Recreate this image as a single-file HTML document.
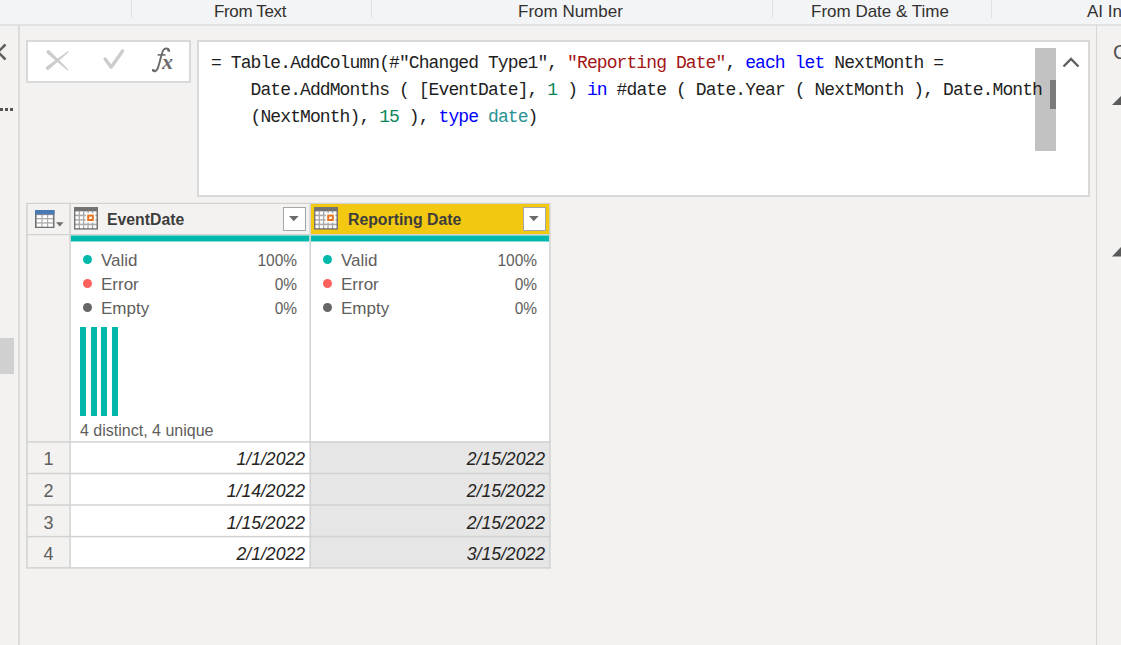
<!DOCTYPE html>
<html><head><meta charset="utf-8">
<style>
*{margin:0;padding:0;box-sizing:border-box}
html,body{width:1121px;height:645px;overflow:hidden;background:#f3f2f1;font-family:"Liberation Sans",sans-serif;color:#252423;position:relative}
.abs{position:absolute}
#top{left:0;top:0;width:1121px;height:24px;background:#f3f4f6}
#topb{left:0;top:24px;width:1121px;height:2px;background:#e0e1e3}
.sep{top:0;width:1px;height:18px;background:#e1e1e1}
.tt{top:2px;font-size:17px;line-height:20px;color:#323130;white-space:nowrap}
#lpb{left:18px;top:25px;width:2px;height:620px;background:#dcdcdc}
#rpb{left:1096px;top:25px;width:1px;height:620px;background:#d6d6d6}
#fxbox{left:26px;top:40px;width:165px;height:43px;background:#fff;border:2px solid #d9d9d9}
#fbox{left:197px;top:40px;width:893px;height:157px;background:#fff;border:2px solid #d9d9d9}
.code{font-family:"Liberation Mono",monospace;font-size:18px;letter-spacing:-0.91px;line-height:27px;white-space:pre;color:#1e1e1e}
.s{color:#a31515}.k{color:#0000ff}.n{color:#098658}.t{color:#2a9393}
.dt{font-style:italic;font-size:17.6px;line-height:20px;text-align:right;white-space:nowrap}
.rn{font-size:18px;line-height:20px;text-align:center;color:#605e5c}
.lbl{font-size:16px;line-height:20px;color:#605e5c;white-space:nowrap}
.hd{font-size:15.8px;font-weight:bold;line-height:20px;color:#3d3d3d;white-space:nowrap}
.dot{width:9px;height:9px;border-radius:50%}
</style></head><body>
<!-- top ribbon -->
<div id="top" class="abs"></div>
<div id="topb" class="abs"></div>
<div class="abs sep" style="left:131px"></div>
<div class="abs sep" style="left:371px"></div>
<div class="abs sep" style="left:772px"></div>
<div class="abs sep" style="left:991px"></div>
<div class="abs tt" style="left:214px;letter-spacing:-0.35px">From Text</div>
<div class="abs tt" style="left:518px">From Number</div>
<div class="abs tt" style="left:811px">From Date &amp; Time</div>
<div class="abs tt" style="left:1087px">AI In</div>

<div id="lpb" class="abs"></div>
<div id="rpb" class="abs"></div>

<!-- formula bar -->
<div id="fxbox" class="abs"></div>
<div id="fbox" class="abs"></div>
<div class="abs" style="left:1035px;top:48px;width:21px;height:103px;background:#c2c2c2"></div>
<div class="abs" style="left:1050px;top:80px;width:6px;height:29px;background:#7a7a7a"></div>
<div class="abs code" style="left:211px;top:50px">= Table.AddColumn(#"Changed Type1", <span class="s">"Reporting Date"</span>, <span class="k">each</span> <span class="k">let</span> NextMonth =
    Date.AddMonths ( [EventDate], <span class="n">1</span> ) <span class="k">in</span> #date ( Date.Year ( NextMonth ), Date.Month
    (NextMonth), <span class="n">15</span> ), <span class="k">type</span> <span class="t">date</span>)</div>


<!-- fx icons -->
<svg class="abs" style="left:40px;top:44px" width="90" height="32" viewBox="0 0 90 32">
<path d="M7.02 9.40 L27.60 26.44 L28.40 25.56 L9.58 6.60 A1.90 1.90 0 0 0 7.02 9.40Z" fill="#cdcdcd"/>
<path d="M8.98 25.49 L28.81 7.89 L28.19 7.11 L6.62 22.51 A1.90 1.90 0 0 0 8.98 25.49Z" fill="#cdcdcd"/>
<path d="M65.2 15 L71.1 23.2 L82.6 6.9" stroke="#cdcdcd" stroke-width="3.4" fill="none" stroke-linecap="round" stroke-linejoin="round"/>
</svg>
<svg class="abs" style="left:145px;top:42px" width="40" height="36" viewBox="145 42 40 36">
<path d="M169.2 50.6 C168.6 48 165 47.6 163.2 50.2 C161.6 52.6 159 66 157.4 69 C156.2 71.6 153.6 72 152.8 70.2" stroke="#6a6a6a" stroke-width="1.9" fill="none" stroke-linecap="round"/>
<circle cx="168.6" cy="50.4" r="1.3" fill="#6a6a6a"/>
<circle cx="153.4" cy="70.2" r="1.3" fill="#6a6a6a"/>
<path d="M157.6 54.9 L165.4 54.9" stroke="#6a6a6a" stroke-width="1.6"/>
</svg>
<div class="abs" style="left:162px;top:47px;font-family:'Liberation Serif',serif;font-style:italic;font-weight:bold;font-size:22px;line-height:30px;color:#6a6a6a;white-space:nowrap">x</div>
<!-- chevron up -->
<svg class="abs" style="left:1060px;top:54px" width="22" height="16" viewBox="0 0 22 16"><path d="M3.5 12.5 L11 5 L18.5 12.5" stroke="#5f5f5f" stroke-width="2.4" fill="none"/></svg>
<!-- left panel -->
<svg class="abs" style="left:0px;top:40px" width="10" height="24" viewBox="0 0 10 24"><path d="M5.5 4.5 L-2 12 L5.5 19.5" stroke="#616161" stroke-width="2.6" fill="none"/></svg>
<div class="abs" style="left:0px;top:108px;width:2.5px;height:2.5px;background:#555"></div>
<div class="abs" style="left:5px;top:108px;width:2.5px;height:2.5px;background:#555"></div>
<div class="abs" style="left:10px;top:108px;width:2.5px;height:2.5px;background:#555"></div>
<div class="abs" style="left:0px;top:338px;width:14px;height:36px;background:#d0d0d0"></div>
<!-- right panel -->
<div class="abs" style="left:1113px;top:40px;font-size:20px;line-height:24px;color:#505050;white-space:nowrap">C</div>
<svg class="abs" style="left:1112px;top:95px" width="9" height="11" viewBox="0 0 9 11"><path d="M0 10 L9 10 L9 1 Z" fill="#5a5a5a"/></svg>
<svg class="abs" style="left:1112px;top:246px" width="9" height="11" viewBox="0 0 9 11"><path d="M0 10.5 L9 10.5 L9 1 Z" fill="#5a5a5a"/></svg>
<!-- table -->
<div class="abs" style="left:26px;top:203px;width:44px;height:32px;background:#f3f2f1"></div>
<div class="abs" style="left:70px;top:203px;width:240px;height:32px;background:#f3f2f1"></div>
<div class="abs" style="left:310px;top:203px;width:240px;height:32px;background:#f2c811"></div>
<div class="abs" style="left:26px;top:235px;width:44px;height:207px;background:#f3f2f1"></div>
<div class="abs" style="left:70px;top:235px;width:240px;height:207px;background:#fff"></div>
<div class="abs" style="left:310px;top:235px;width:240px;height:207px;background:#fff"></div>
<div class="abs" style="left:26px;top:442px;width:44px;height:126px;background:#f3f2f1"></div>
<div class="abs" style="left:70px;top:442px;width:240px;height:126px;background:#fff"></div>
<div class="abs" style="left:310px;top:442px;width:240px;height:126px;background:#e6e6e6"></div>
<svg class="abs" style="left:0;top:0" width="1121" height="645" viewBox="0 0 1121 645">
<rect x="70.3" y="235.4" width="239.2" height="6.1" fill="#01b8aa"/>
<rect x="311" y="235.4" width="238.2" height="6.1" fill="#01b8aa"/>
<rect x="26.2" y="202.8" width="524.4" height="1.2" fill="#d2d2d2"/>
<rect x="26.2" y="234.0" width="524.4" height="1.2" fill="#d2d2d2"/>
<rect x="26.2" y="441.15" width="524.4" height="1.5" fill="#d2d2d2"/>
<rect x="26.2" y="472.75" width="524.4" height="1.5" fill="#d2d2d2"/>
<rect x="26.2" y="504.25" width="524.4" height="1.5" fill="#d2d2d2"/>
<rect x="26.2" y="535.85" width="524.4" height="1.5" fill="#d2d2d2"/>
<rect x="26.2" y="567.15" width="524.4" height="1.5" fill="#d2d2d2"/>
<rect x="26.15" y="203" width="1.5" height="365.6" fill="#d2d2d2"/>
<rect x="69.35" y="203" width="1.5" height="365.6" fill="#d2d2d2"/>
<rect x="309.45" y="203" width="1.5" height="365.6" fill="#d2d2d2"/>
<rect x="549.15" y="203" width="1.5" height="365.6" fill="#d2d2d2"/>
</svg>
<div class="abs rn" style="left:27px;top:449px;width:43px">1</div>
<div class="abs dt" style="left:71px;top:449px;width:234px">1/1/2022</div>
<div class="abs dt" style="left:311px;top:449px;width:234px">2/15/2022</div>
<div class="abs rn" style="left:27px;top:481px;width:43px">2</div>
<div class="abs dt" style="left:71px;top:481px;width:234px">1/14/2022</div>
<div class="abs dt" style="left:311px;top:481px;width:234px">2/15/2022</div>
<div class="abs rn" style="left:27px;top:513px;width:43px">3</div>
<div class="abs dt" style="left:71px;top:513px;width:234px">1/15/2022</div>
<div class="abs dt" style="left:311px;top:513px;width:234px">2/15/2022</div>
<div class="abs rn" style="left:27px;top:544px;width:43px">4</div>
<div class="abs dt" style="left:71px;top:544px;width:234px">2/1/2022</div>
<div class="abs dt" style="left:311px;top:544px;width:234px">3/15/2022</div>
<!-- /table -->
<svg class="abs" style="left:35px;top:210px" width="30" height="18" viewBox="0 0 30 18">
<rect x="0" y="0" width="19.5" height="18" fill="#6f6f6f"/>
<rect x="0" y="0" width="19.5" height="4.6" fill="#4a7ab4"/><rect x="1.4" y="4.6" width="16.8" height="12.2" fill="#ababab"/>
<rect x="1.8" y="5.2" width="4.6" height="2.8" fill="#fff"/><rect x="7.6" y="5.2" width="4.4" height="2.8" fill="#fff"/><rect x="13.2" y="5.2" width="4.6" height="2.8" fill="#fff"/>
<rect x="1.8" y="9.3" width="4.6" height="3" fill="#fff"/><rect x="7.6" y="9.3" width="4.4" height="3" fill="#fff"/><rect x="13.2" y="9.3" width="4.6" height="3" fill="#fff"/>
<rect x="1.8" y="13.6" width="4.6" height="3" fill="#fff"/><rect x="7.6" y="13.6" width="4.4" height="3" fill="#fff"/><rect x="13.2" y="13.6" width="4.6" height="3" fill="#fff"/>
<path d="M21 12.2 L28.6 12.2 L24.8 16.6 Z" fill="#6f6f6f"/>
</svg>
<svg class="abs" style="left:74px;top:207px" width="24" height="23" viewBox="0 0 24 23"><rect x="0" y="0" width="24" height="22.6" fill="#737373"/><rect x="1.5" y="4" width="21" height="17" fill="#a9a9a9"/><rect x="1.5" y="4.6" width="3.1" height="3" fill="#fff"/><rect x="5.9" y="4.6" width="3.1" height="3" fill="#fff"/><rect x="10.3" y="4.6" width="3.1" height="3" fill="#fff"/><rect x="14.7" y="4.6" width="3.1" height="3" fill="#fff"/><rect x="19.3" y="4.6" width="3.1" height="3" fill="#fff"/><rect x="1.5" y="9.2" width="3.1" height="3" fill="#fff"/><rect x="5.9" y="9.2" width="3.1" height="3" fill="#fff"/><rect x="10.3" y="9.2" width="3.1" height="3" fill="#fff"/><rect x="14.7" y="9.2" width="3.1" height="3" fill="#fff"/><rect x="19.3" y="9.2" width="3.1" height="3" fill="#fff"/><rect x="1.5" y="13.6" width="3.1" height="3" fill="#fff"/><rect x="5.9" y="13.6" width="3.1" height="3" fill="#fff"/><rect x="10.3" y="13.6" width="3.1" height="3" fill="#fff"/><rect x="14.7" y="13.6" width="3.1" height="3" fill="#fff"/><rect x="19.3" y="13.6" width="3.1" height="3" fill="#fff"/><rect x="1.5" y="18.2" width="3.1" height="3" fill="#fff"/><rect x="5.9" y="18.2" width="3.1" height="3" fill="#fff"/><rect x="10.3" y="18.2" width="3.1" height="3" fill="#fff"/><rect x="14.7" y="18.2" width="3.1" height="3" fill="#fff"/><rect x="19.3" y="18.2" width="3.1" height="3" fill="#fff"/><rect x="11.8" y="6.2" width="9.5" height="9.3" fill="#fff"/><rect x="14.2" y="8.6" width="4.6" height="4.4" fill="none" stroke="#e8731c" stroke-width="2"/></svg>
<svg class="abs" style="left:314px;top:207px" width="24" height="23" viewBox="0 0 24 23"><rect x="0" y="0" width="24" height="22.6" fill="#737373"/><rect x="1.5" y="4" width="21" height="17" fill="#a9a9a9"/><rect x="1.5" y="4.6" width="3.1" height="3" fill="#fff"/><rect x="5.9" y="4.6" width="3.1" height="3" fill="#fff"/><rect x="10.3" y="4.6" width="3.1" height="3" fill="#fff"/><rect x="14.7" y="4.6" width="3.1" height="3" fill="#fff"/><rect x="19.3" y="4.6" width="3.1" height="3" fill="#fff"/><rect x="1.5" y="9.2" width="3.1" height="3" fill="#fff"/><rect x="5.9" y="9.2" width="3.1" height="3" fill="#fff"/><rect x="10.3" y="9.2" width="3.1" height="3" fill="#fff"/><rect x="14.7" y="9.2" width="3.1" height="3" fill="#fff"/><rect x="19.3" y="9.2" width="3.1" height="3" fill="#fff"/><rect x="1.5" y="13.6" width="3.1" height="3" fill="#fff"/><rect x="5.9" y="13.6" width="3.1" height="3" fill="#fff"/><rect x="10.3" y="13.6" width="3.1" height="3" fill="#fff"/><rect x="14.7" y="13.6" width="3.1" height="3" fill="#fff"/><rect x="19.3" y="13.6" width="3.1" height="3" fill="#fff"/><rect x="1.5" y="18.2" width="3.1" height="3" fill="#fff"/><rect x="5.9" y="18.2" width="3.1" height="3" fill="#fff"/><rect x="10.3" y="18.2" width="3.1" height="3" fill="#fff"/><rect x="14.7" y="18.2" width="3.1" height="3" fill="#fff"/><rect x="19.3" y="18.2" width="3.1" height="3" fill="#fff"/><rect x="11.8" y="6.2" width="9.5" height="9.3" fill="#fff"/><rect x="14.2" y="8.6" width="4.6" height="4.4" fill="none" stroke="#e8731c" stroke-width="2"/></svg>
<div class="abs" style="left:283px;top:207px;width:23px;height:24px;background:#fff;border:1px solid #a6a6a6"></div>
<svg class="abs" style="left:289px;top:216px" width="10" height="6" viewBox="0 0 10 6"><path d="M0 0 L9.6 0 L4.8 5.2 Z" fill="#6b6b6b"/></svg>
<div class="abs" style="left:523px;top:207px;width:23px;height:24px;background:#fff;border:1px solid #a6a6a6"></div>
<svg class="abs" style="left:529px;top:216px" width="10" height="6" viewBox="0 0 10 6"><path d="M0 0 L9.6 0 L4.8 5.2 Z" fill="#6b6b6b"/></svg>
<div class="abs hd" style="left:107px;top:210px">EventDate</div>
<div class="abs hd" style="left:348px;top:210px">Reporting Date</div>
<div class="abs dot" style="left:83px;top:255px;background:#01b8aa"></div>
<div class="abs lbl" style="left:101px;top:251px;font-size:17px">Valid</div>
<div class="abs lbl" style="left:200px;top:251px;width:97px;text-align:right;font-size:17px;transform:scaleX(0.91);transform-origin:100% 50%">100%</div>
<div class="abs dot" style="left:83px;top:279px;background:#fd625e"></div>
<div class="abs lbl" style="left:101px;top:275px;font-size:17px">Error</div>
<div class="abs lbl" style="left:200px;top:275px;width:97px;text-align:right;font-size:17px;transform:scaleX(0.91);transform-origin:100% 50%">0%</div>
<div class="abs dot" style="left:83px;top:303px;background:#666666"></div>
<div class="abs lbl" style="left:101px;top:299px;font-size:17px">Empty</div>
<div class="abs lbl" style="left:200px;top:299px;width:97px;text-align:right;font-size:17px;transform:scaleX(0.91);transform-origin:100% 50%">0%</div>
<div class="abs dot" style="left:323px;top:255px;background:#01b8aa"></div>
<div class="abs lbl" style="left:341px;top:251px;font-size:17px">Valid</div>
<div class="abs lbl" style="left:440px;top:251px;width:97px;text-align:right;font-size:17px;transform:scaleX(0.91);transform-origin:100% 50%">100%</div>
<div class="abs dot" style="left:323px;top:279px;background:#fd625e"></div>
<div class="abs lbl" style="left:341px;top:275px;font-size:17px">Error</div>
<div class="abs lbl" style="left:440px;top:275px;width:97px;text-align:right;font-size:17px;transform:scaleX(0.91);transform-origin:100% 50%">0%</div>
<div class="abs dot" style="left:323px;top:303px;background:#666666"></div>
<div class="abs lbl" style="left:341px;top:299px;font-size:17px">Empty</div>
<div class="abs lbl" style="left:440px;top:299px;width:97px;text-align:right;font-size:17px;transform:scaleX(0.91);transform-origin:100% 50%">0%</div>
<div class="abs" style="left:80.0px;top:327px;width:6px;height:89px;background:#01b8aa"></div>
<div class="abs" style="left:90.5px;top:327px;width:6px;height:89px;background:#01b8aa"></div>
<div class="abs" style="left:101.0px;top:327px;width:6px;height:89px;background:#01b8aa"></div>
<div class="abs" style="left:111.5px;top:327px;width:6px;height:89px;background:#01b8aa"></div>
<div class="abs lbl" style="left:80px;top:421px;color:#605e5c">4 distinct, 4 unique</div>
</body></html>
